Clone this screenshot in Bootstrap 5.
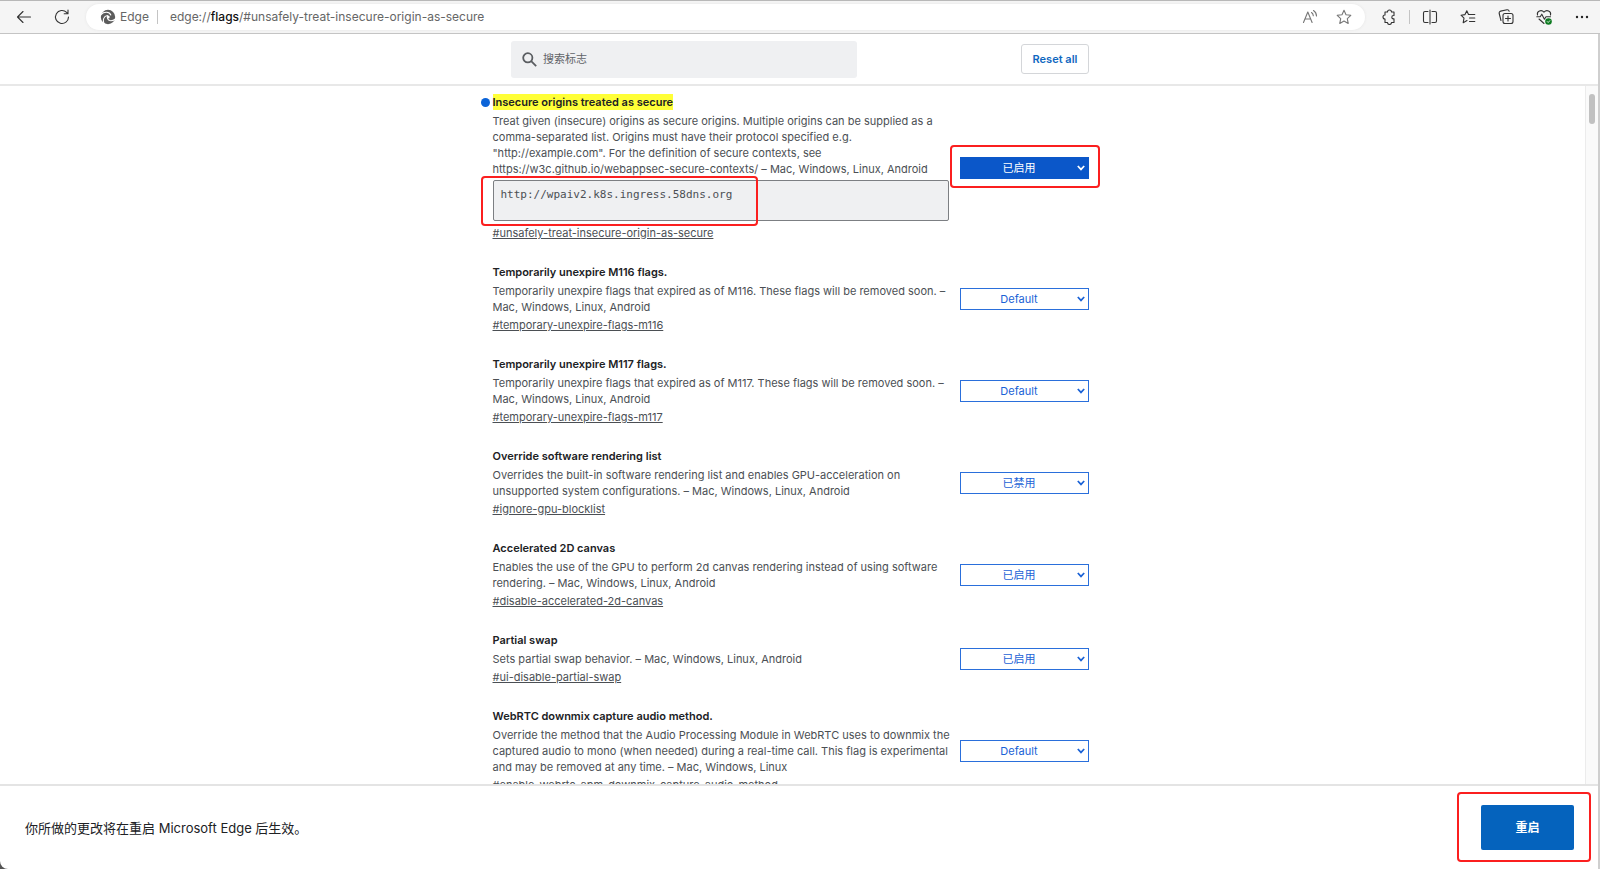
<!DOCTYPE html>
<html lang="zh-CN">
<head>
<meta charset="utf-8">
<meta name="viewport" content="width=device-width, initial-scale=1">
<title>edge://flags</title>
<link href="https://cdn.jsdelivr.net/npm/bootstrap@5.3.0/dist/css/bootstrap.min.css" rel="stylesheet">
<style>
body{font-family:Inter,"Noto Sans CJK SC",sans-serif;font-size:11px;line-height:16px;color:#4b4f54;background:#555}
.shell{background:#fff;border-bottom-left-radius:8px}
.toolbar{background:#f5f5f5;height:34px;border-top:1px solid #b8b8b8;border-bottom:1px solid #c4c4c4;padding:0 10px 0 16px}
.tool{border:0;background:none;padding:0;width:16px;height:16px;color:#333;line-height:0}
.tool svg,.omnibox svg{width:16px;height:16px;fill:none;stroke:currentColor;stroke-width:1.1;stroke-linecap:round;stroke-linejoin:round}
.reload{margin-left:22px}
.omnibox{background:#fff;height:26px;border-radius:13px;padding:0 13px 0 14px;box-shadow:0 0 3px #e4e4e4;font-size:12px;color:#666;margin:0 16px}
.omnibox .tool{color:#777}
.omnibox .rule,.toolbar .rule{width:1px;height:14px;background:#c4c4c4}
.url{color:#666;text-decoration:none}
.url strong{color:#111;font-weight:500}
.omnibox .listen{margin-right:18px}
.tools{gap:22px}
.split{gap:12px;margin-left:-10px}
.viewport{border-right:2px solid #cfcfcf}
.searchbar{height:52px;border-bottom:2px solid #e8e8e8;padding-right:12px}
.column{width:620px;margin:0 auto;padding:0 14px 0 10px}
.searchbox{background:#eff0f2;width:346px;height:37px;border-radius:3px;padding:0 11px;margin-left:18px;gap:6px}
.searchbox input{font-size:11px;border:0;background:none;outline:0;padding:0}
.searchbox input::placeholder{color:#5f6368;opacity:1}
.reset{width:68px;height:30px;font-size:11px;font-weight:600;color:#0f67c0;background:#fff;border:1px solid #d4d6d9;border-radius:3px;padding:0}
.flags{padding-top:6px}
.flag{gap:11px;margin-bottom:19px}
.flag h2{font-size:11px;line-height:20px;font-weight:600;color:#202124;margin:0 0 1px}
.flag p{margin:0 -8px 0 0}
.flag .anchor{display:block;line-height:20px;color:#4b4f54;text-decoration:underline}
.flag .hit{background:#ffff37;padding:1px 0}
.dot{left:-12px;top:6px;width:9px;height:9px;border-radius:50%;background:#0b63d8}
.origins{margin:3px 0 2px}
.origins textarea{display:block;width:100%;height:41px;resize:none;background:#eff0f2;border:1px solid #7c7f83;border-radius:2px;padding:6px 7px;font-family:"DejaVu Sans Mono",monospace;font-size:11px;line-height:16px;color:#4b4f54;outline:0}
.choice{display:block;width:129px;height:22px;appearance:none;border:1px solid #2a6fdb;border-radius:0;padding:0 18px 0 8px;font-size:11px;line-height:18px;text-align-last:center;color:#1a62d6;background:#fff url("data:image/svg+xml,%3Csvg xmlns='http://www.w3.org/2000/svg' width='8' height='6' fill='none' stroke='%231a62d6' stroke-width='1.7'%3E%3Cpath d='M.8 1 4 4.4 7.2 1'/%3E%3C/svg%3E") no-repeat right 3px center}
.choice.changed{color:#fff;border-color:#0b57c9;background-color:#0b57c9;background-image:url("data:image/svg+xml,%3Csvg xmlns='http://www.w3.org/2000/svg' width='8' height='6' fill='none' stroke='%23fff' stroke-width='1.7'%3E%3Cpath d='M.8 1 4 4.4 7.2 1'/%3E%3C/svg%3E")}
.frame{border:2px solid #fb1f1f;border-radius:4px;pointer-events:none}
.frame-origin{left:-12px;top:-4px;width:277px;height:50px}
.frame-choice{inset:-12px -11px -9px -10px}
.frame-restart{inset:-13px -17px -12px -24px}
.track{width:13px;background:#fafafa;border-left:1px solid #ececec;padding:8px 3px}
.thumb{width:6px;height:30px;border-radius:3px;background:#c1c1c1}
.restartbar{border-top:2px solid #e4e4e4;height:85px;padding:0 24px 0 25px;font-size:13px;color:#202124}
.restart{width:93px;height:45px;border:0;border-radius:2px;background:#0563bd;color:#fff;font-size:12px;font-weight:700}
</style>
</head>
<body>
<div class="shell d-flex flex-column vh-100 overflow-hidden">
  <nav class="toolbar d-flex align-items-center flex-shrink-0" aria-label="Browser">
    <button class="tool" aria-label="Back"><svg viewBox="0 0 16 16"><path d="M14.500 8H1.500M7 2.500 1.500 8 7 13.500"/></svg></button>
    <button class="tool reload" aria-label="Reload"><svg viewBox="0 0 16 16"><path d="M14.500 8A6.500 6.500 0 1 1 12.600 3.400L13.800 4.600M14 1v3.800h-3.800"/></svg></button>
    <div class="omnibox d-flex align-items-center flex-fill">
      <svg viewBox="0 0 16 16"><circle cx="8" cy="8" r="7.200" fill="#5c5c5c" stroke="none"/><path stroke="#fff" stroke-width="1.100" d="M1 5.500C4 2.500 9.500 2.500 10.800 6M4.500 15.500C2 11 4 6.800 7.500 6.500M7.500 9.500C8.500 12.300 12 12.500 15.500 10"/><circle cx="8.200" cy="8" r="1.500" fill="#fff" stroke="none"/></svg>
      <span class="ms-1">Edge</span>
      <span class="rule mx-2"></span>
      <a class="url ms-1 flex-fill" href="#unsafely-treat-insecure-origin-as-secure">edge://<strong>flags</strong>/#unsafely-treat-insecure-origin-as-secure</a>
      <button class="tool listen" aria-label="Read aloud"><svg viewBox="0 0 16 16"><path d="M1.500 13.500 5.800 3l4.300 10.500M3 10h5.700M9.500 3.500q1.700 1.200 1.800 3.200M11.500 1.500q3 2 3 5.500"/></svg></button>
      <button class="tool" aria-label="Favorite"><svg viewBox="0 0 16 16"><path d="m8 1.300 2 4.400 4.800.6-3.500 3.300.9 4.800L8 12l-4.200 2.400.9-4.800L1.200 6.300 6 5.700z"/></svg></button>
    </div>
    <div class="tools d-flex align-items-center">
      <button class="tool" aria-label="Extensions"><svg viewBox="0 0 16 16"><path d="M4 3h2.500a2 2 0 0 1 4 0H13v3.500h-.5a1.700 1.700 0 0 0 0 3.400h.5v3.600h-2.500a2 2 0 0 1-4 0H4V10a2 2 0 0 1 0-4z"/></svg></button>
      <div class="split d-flex align-items-center"><span class="rule"></span>
      <button class="tool" aria-label="Split screen"><svg viewBox="0 0 16 16"><path d="M6 2.500H3A1.500 1.500 0 0 0 1.500 4v8A1.500 1.500 0 0 0 3 13.500h3M10 2.500h3A1.500 1.500 0 0 1 14.500 4v8a1.500 1.500 0 0 1-1.500 1.500h-3M8 1v14"/></svg></button></div>
      <button class="tool" aria-label="Favorites"><svg viewBox="0 0 16 16"><path d="M8.500 5.500 6.800 1.700 5 5.600l-4 .6 3 3-.8 4.500L7 11.500M8.500 5.500h6.300M9.500 9h5.300M9.500 12.500h5.300"/></svg></button>
      <button class="tool" aria-label="Collections"><svg viewBox="0 0 16 16"><rect x="5" y="4.500" width="10" height="10" rx="2"/><path d="M10 7v5M7.500 9.500h5M3 11.500 1.200 4.500a2 2 0 0 1 1.500-2.400L9 .8a2 2 0 0 1 2.200 1.500"/></svg></button>
      <button class="tool" aria-label="Browser essentials"><svg viewBox="0 0 16 16"><path d="M1.500 6C.5 2 5.500.2 8 3.200 10.500.2 15.500 2 14.500 6M.8 7.800h3.400l1.600-2.600 2.600 5 1.600-2.400h4.500M3 10l5 4.500"/><circle cx="12.500" cy="12.500" r="3.300" fill="#0f7b22" stroke="none"/><path stroke="#fff" stroke-width=".8" d="m11.200 12.500 1 1 1.600-1.800"/></svg></button>
      <button class="tool" aria-label="Settings and more"><svg viewBox="0 0 16 16"><g fill="#222" stroke="none"><circle cx="3" cy="8" r="1.200"/><circle cx="8" cy="8" r="1.200"/><circle cx="13" cy="8" r="1.200"/></g></svg></button>
    </div>
  </nav>

  <div class="viewport d-flex flex-column flex-fill overflow-hidden">
    <header class="searchbar flex-shrink-0 d-flex align-items-center">
      <div class="column d-flex align-items-center justify-content-between">
        <label class="searchbox d-flex align-items-center">
          <svg width="15" height="15" viewBox="0 0 15 15" fill="none" stroke="#5a5d61" stroke-width="1.800"><circle cx="5.800" cy="5.800" r="4.600"/><path d="m9.200 9.200 5 5"/></svg>
          <input class="flex-fill" type="search" placeholder="搜索标志" aria-label="搜索标志">
        </label>
        <button class="reset">Reset all</button>
      </div>
    </header>

    <div class="d-flex flex-fill overflow-hidden">
      <main class="flex-fill overflow-hidden">
        <div class="column flags">
          <section class="flag d-flex align-items-center">
            <div class="flex-fill position-relative">
              <span class="dot position-absolute"></span>
              <h2><span class="hit">Insecure origins treated as secure</span></h2>
              <p>Treat given (insecure) origins as secure origins. Multiple origins can be supplied as a comma-separated list. Origins must have their protocol specified e.g. "http://example.com". For the definition of secure contexts, see https://w3c.github.io/webappsec-secure-contexts/ – Mac, Windows, Linux, Android</p>
              <div class="origins position-relative">
                <textarea aria-label="Insecure origins treated as secure" spellcheck="false">http://wpaiv2.k8s.ingress.58dns.org</textarea>
                <span class="frame frame-origin position-absolute"></span>
              </div>
              <a class="anchor" href="#unsafely-treat-insecure-origin-as-secure">#unsafely-treat-insecure-origin-as-secure</a>
            </div>
            <div class="position-relative">
              <select class="choice changed" aria-label="Insecure origins treated as secure"><option>已启用</option><option>已禁用</option></select>
              <span class="frame frame-choice position-absolute"></span>
            </div>
          </section>

          <section class="flag d-flex align-items-center">
            <div class="flex-fill">
              <h2>Temporarily unexpire M116 flags.</h2>
              <p>Temporarily unexpire flags that expired as of M116. These flags will be removed soon. – Mac, Windows, Linux, Android</p>
              <a class="anchor" href="#temporary-unexpire-flags-m116">#temporary-unexpire-flags-m116</a>
            </div>
            <div><select class="choice" aria-label="Temporarily unexpire M116 flags"><option>Default</option></select></div>
          </section>

          <section class="flag d-flex align-items-center">
            <div class="flex-fill">
              <h2>Temporarily unexpire M117 flags.</h2>
              <p>Temporarily unexpire flags that expired as of M117. These flags will be removed soon. – Mac, Windows, Linux, Android</p>
              <a class="anchor" href="#temporary-unexpire-flags-m117">#temporary-unexpire-flags-m117</a>
            </div>
            <div><select class="choice" aria-label="Temporarily unexpire M117 flags"><option>Default</option></select></div>
          </section>

          <section class="flag d-flex align-items-center">
            <div class="flex-fill">
              <h2>Override software rendering list</h2>
              <p>Overrides the built-in software rendering list and enables GPU-acceleration on unsupported system configurations. – Mac, Windows, Linux, Android</p>
              <a class="anchor" href="#ignore-gpu-blocklist">#ignore-gpu-blocklist</a>
            </div>
            <div><select class="choice" aria-label="Override software rendering list"><option>已禁用</option><option>已启用</option></select></div>
          </section>

          <section class="flag d-flex align-items-center">
            <div class="flex-fill">
              <h2>Accelerated 2D canvas</h2>
              <p>Enables the use of the GPU to perform 2d canvas rendering instead of using software rendering. – Mac, Windows, Linux, Android</p>
              <a class="anchor" href="#disable-accelerated-2d-canvas">#disable-accelerated-2d-canvas</a>
            </div>
            <div><select class="choice" aria-label="Accelerated 2D canvas"><option>已启用</option><option>已禁用</option></select></div>
          </section>

          <section class="flag d-flex align-items-center">
            <div class="flex-fill">
              <h2>Partial swap</h2>
              <p>Sets partial swap behavior. – Mac, Windows, Linux, Android</p>
              <a class="anchor" href="#ui-disable-partial-swap">#ui-disable-partial-swap</a>
            </div>
            <div><select class="choice" aria-label="Partial swap"><option>已启用</option><option>已禁用</option></select></div>
          </section>

          <section class="flag d-flex align-items-center">
            <div class="flex-fill">
              <h2>WebRTC downmix capture audio method.</h2>
              <p>Override the method that the Audio Processing Module in WebRTC uses to downmix the captured audio to mono (when needed) during a real-time call. This flag is experimental and may be removed at any time. – Mac, Windows, Linux</p>
              <a class="anchor" href="#enable-webrtc-apm-downmix-capture-audio-method">#enable-webrtc-apm-downmix-capture-audio-method</a>
            </div>
            <div><select class="choice" aria-label="WebRTC downmix capture audio method"><option>Default</option></select></div>
          </section>
        </div>
      </main>
      <div class="track flex-shrink-0"><div class="thumb"></div></div>
    </div>

    <footer class="restartbar flex-shrink-0 d-flex align-items-center justify-content-between">
      <span>你所做的更改将在重启 Microsoft Edge 后生效。</span>
      <div class="position-relative">
        <button class="restart">重启</button>
        <span class="frame frame-restart position-absolute"></span>
      </div>
    </footer>
  </div>
</div>
<script src="https://cdn.jsdelivr.net/npm/bootstrap@5.3.0/dist/js/bootstrap.bundle.min.js"></script>
</body>
</html>
